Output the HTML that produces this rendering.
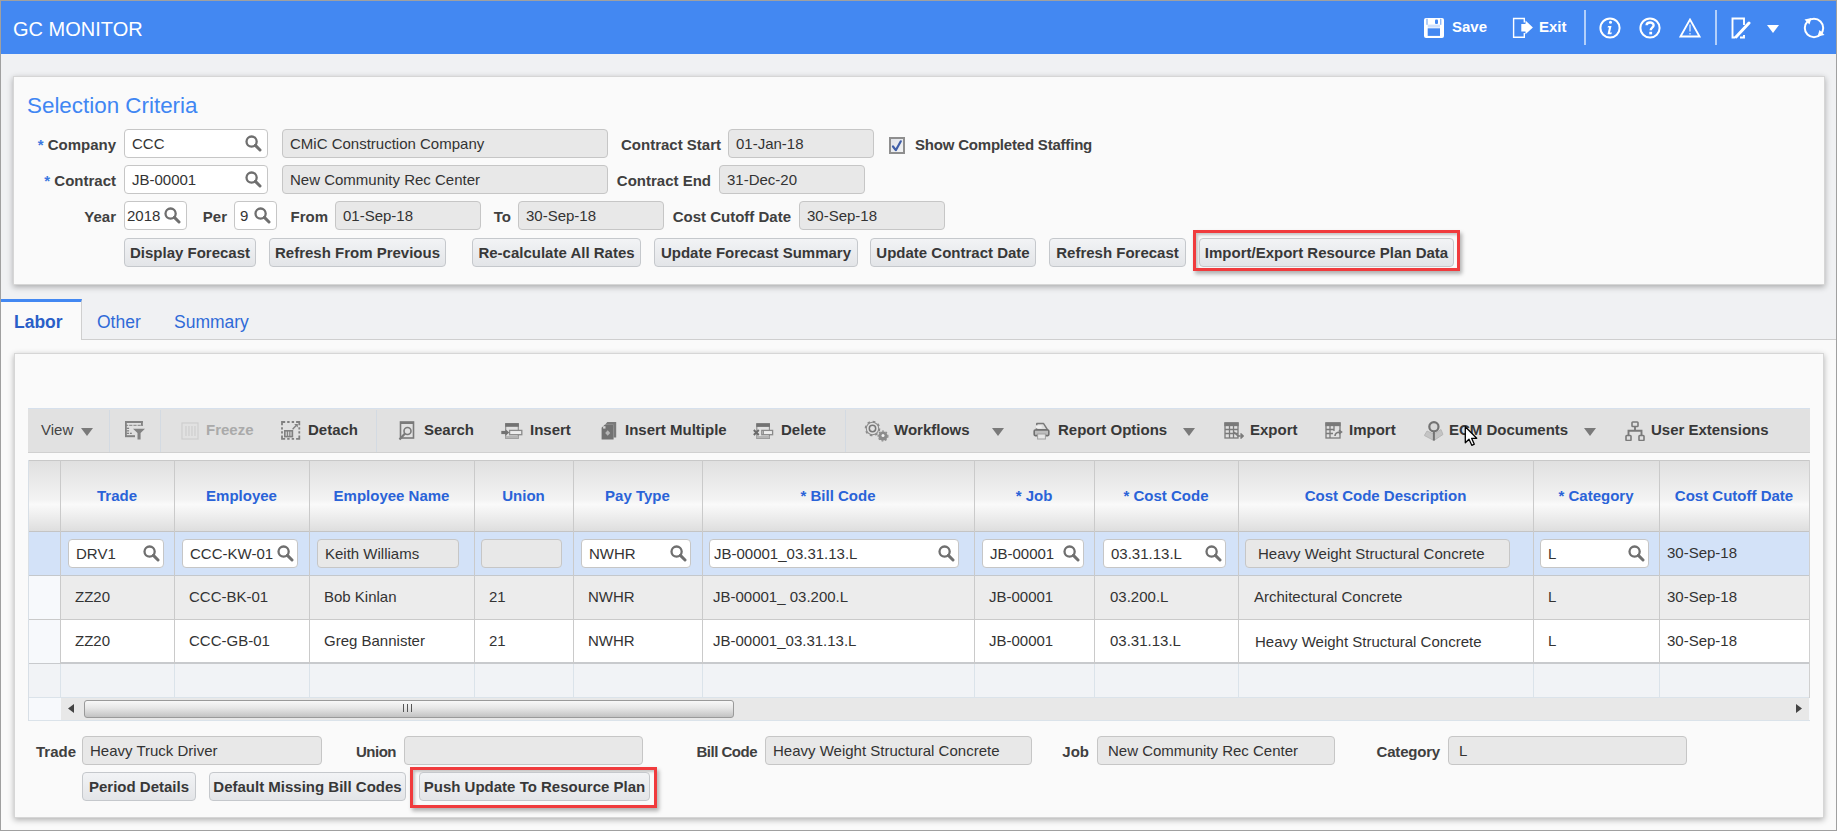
<!DOCTYPE html>
<html><head><meta charset="utf-8">
<style>
*{box-sizing:border-box}
html,body{margin:0;padding:0}
body{width:1837px;height:831px;position:relative;overflow:hidden;background:#f0f1f3;font-family:"Liberation Sans",sans-serif;color:#333;font-size:15px}
.a{position:absolute;white-space:nowrap}
#frame{position:absolute;left:0;top:0;width:1837px;height:831px;border:1px solid #a0a0a0;pointer-events:none;z-index:50}
#hdr{position:absolute;left:1px;top:1px;width:1835px;height:53px;background:#4388f2}
.ht{position:absolute;color:#fff;font-weight:bold;font-size:15px;line-height:20px;white-space:nowrap}
.panel{position:absolute;background:#fafafa;border:1px solid #d6d6d6;box-shadow:0 2px 6px rgba(0,0,0,.3)}
.lbl{position:absolute;white-space:nowrap;font-weight:bold;font-size:15px;line-height:29px;color:#404040;text-align:right;padding-top:1px}
.inp{position:absolute;height:29px;border:1px solid #c6c6c6;border-radius:4px;background:#fff;font-size:15px;line-height:27px;padding-left:7px;white-space:nowrap;color:#333;overflow:hidden}
.ro{background:#e8e8e8}
.btn{position:absolute;height:29px;border:1px solid #c5c8cc;border-radius:4px;background:linear-gradient(#f2f3f5,#e3e5e8);font-weight:bold;font-size:15px;line-height:27px;text-align:center;white-space:nowrap;color:#383838}
.red{position:absolute;border:3px solid #f03b3d;box-shadow:2px 3px 4px rgba(0,0,0,.3),inset 2px 2px 3px rgba(0,0,0,.22)}
.mag{position:absolute;width:17px;height:17px;right:5px;top:5px}
.tb{position:absolute;top:420px;font-weight:bold;font-size:15px;line-height:20px;white-space:nowrap;color:#383838}
.tsep{position:absolute;top:410px;width:1px;height:42px;background:#d3dae2}
.ico{position:absolute}
.vl{position:absolute;width:1px;background:#cacaca}
.hl{position:absolute;height:1px;background:#cacaca}
.th{position:absolute;top:486px;font-weight:bold;font-size:15px;line-height:20px;color:#2a63d8;text-align:center;white-space:nowrap}
.td{position:absolute;font-size:15px;line-height:20px;white-space:nowrap;color:#333}
.ti{position:absolute;top:539px;height:29px;border:1px solid #c6c6c6;border-radius:4px;background:#fff;font-size:15px;line-height:27px;padding-left:7px;white-space:nowrap;color:#333;overflow:hidden}
.ti.ro{background:#e8e8e8}
.ti .mag{right:3px}
</style></head><body>
<div id="frame"></div>
<div id="hdr"></div>
<div class="a" style="left:13px;top:17px;font-size:20px;line-height:24px;color:#fff">GC MONITOR</div>

<!-- header icons -->
<svg class="ico" style="left:1424px;top:17.5px" width="20" height="20" viewBox="0 0 20 20">
 <rect x="0" y="0" width="20" height="20" rx="2" fill="#fff"/>
 <rect x="3.7" y="10.3" width="12.3" height="7.6" fill="#4388f2"/>
 <rect x="11" y="1.5" width="3" height="4.5" rx="1" fill="#4388f2"/>
 <rect x="2.3" y="0.8" width="1.4" height="6" fill="#4388f2" opacity=".6"/>
 <rect x="16" y="0.8" width="1.4" height="6" fill="#4388f2" opacity=".6"/>
 <rect x="3.7" y="6.6" width="12.3" height="3" fill="#4388f2" opacity=".25"/>
</svg>
<div class="ht" style="left:1452px;top:17px">Save</div>
<svg class="ico" style="left:1511px;top:17px" width="23" height="22" viewBox="0 0 23 22" fill="none" stroke="#fff">
 <path d="M13.3 5.4 V1.5 H2.6 V20.2 H13.3 V15.9" stroke-width="1.4"/>
 <path d="M10.3 7.1 H14.5 V3.4 L21.9 10.5 L14.5 17.2 V14.5 H10.3 Z" fill="#fff" stroke="none"/>
</svg>
<div class="ht" style="left:1539px;top:17px">Exit</div>
<div class="a" style="left:1584px;top:10px;width:2px;height:35px;background:rgba(255,255,255,.6)"></div>
<svg class="ico" style="left:1599px;top:17px" width="22" height="22" viewBox="0 0 22 22">
 <circle cx="11" cy="11" r="9.6" fill="none" stroke="#fff" stroke-width="2"/>
 <circle cx="11.5" cy="5.3" r="1.5" fill="#fff"/>
 <path d="M9 9 H12.5 L11 15.5 H13 L12.3 17.3 H8.5 L10 10.6 H8.6 Z" fill="#fff"/>
</svg>
<svg class="ico" style="left:1639px;top:17px" width="22" height="22" viewBox="0 0 22 22">
 <circle cx="11" cy="11" r="9.6" fill="none" stroke="#fff" stroke-width="2"/>
 <path d="M7.6 8.3 C7.6 4.8 14.6 4.5 14.6 8.2 C14.6 10.6 11.7 10.6 11.7 13.2" fill="none" stroke="#fff" stroke-width="2.4"/>
 <rect x="10.3" y="14.8" width="2.8" height="2.6" fill="#fff"/>
</svg>
<svg class="ico" style="left:1679px;top:18px" width="22" height="20" viewBox="0 0 22 20">
 <path d="M11 1.5 L20.5 18.5 H1.5 Z" fill="none" stroke="#fff" stroke-width="1.8" stroke-linejoin="miter"/>
 <rect x="10.3" y="6.5" width="1.4" height="7" fill="#fff" opacity=".8"/>
 <rect x="10.3" y="15" width="1.4" height="1.5" fill="#fff" opacity=".8"/>
</svg>
<div class="a" style="left:1715px;top:10px;width:2px;height:35px;background:rgba(255,255,255,.6)"></div>
<svg class="ico" style="left:1731px;top:17px" width="21" height="22" viewBox="0 0 21 22" fill="none" stroke="#fff">
 <path d="M13 8 V1.5 H1.5 V20.5 H4 M9 20.5 H13 V18" stroke-width="1.9"/>
 <path d="M5 20 L18 6" stroke-width="3" stroke-linecap="round"/>
</svg>
<svg class="ico" style="left:1767px;top:25px" width="12" height="8" viewBox="0 0 12 8"><path d="M0 0 H12 L6 8 Z" fill="#fff"/></svg>
<svg class="ico" style="left:1803px;top:17px" width="23" height="22" viewBox="0 0 23 22">
 <circle cx="11" cy="11" r="9.2" fill="none" stroke="#fff" stroke-width="2"/>
 <path d="M1.5 2.5 L8.5 1 L6.5 7.5 Z" fill="#fff"/>
 <path d="M21.5 18 L14.5 19.5 L16.5 13 Z" fill="#fff"/>
</svg>

<!-- Selection criteria panel -->
<div class="panel" style="left:13px;top:76px;width:1812px;height:209px"></div>
<div class="a" style="left:27px;top:93px;font-size:22.4px;line-height:26px;color:#4086f3">Selection Criteria</div>

<div class="lbl" style="left:16px;top:129px;width:100px"><span style="color:#3a78e0">*</span> Company</div>
<div class="inp" style="left:124px;top:129px;width:144px">CCC<svg class="mag" viewBox="0 0 17 17"><circle cx="6.6" cy="6.6" r="5.1" fill="none" stroke="#6f6f6f" stroke-width="2.3"/><path d="M10.4 10.4 L15 15" stroke="#6f6f6f" stroke-width="3" stroke-linecap="round"/></svg></div>
<div class="inp ro" style="left:282px;top:129px;width:326px">CMiC Construction Company</div>
<div class="lbl" style="left:600px;top:129px;width:121px">Contract Start</div>
<div class="inp ro" style="left:728px;top:129px;width:146px">01-Jan-18</div>
<svg class="ico" style="left:889px;top:137px" width="16" height="17" viewBox="0 0 16 17">
 <defs><linearGradient id="cbg" x1="0" y1="0" x2="1" y2="1"><stop offset="0" stop-color="#dfe2e8"/><stop offset="1" stop-color="#f4f4f4"/></linearGradient></defs>
 <rect x="1" y="1" width="14" height="15" fill="url(#cbg)" stroke="#8e8e8e" stroke-width="2"/>
 <path d="M4 9.5 L6.8 13.2 L11.8 4.3" fill="none" stroke="#3f5ea8" stroke-width="2.2" stroke-linecap="round" stroke-linejoin="round"/>
</svg>
<div class="lbl" style="left:915px;top:129px;text-align:left;letter-spacing:-.2px">Show Completed Staffing</div>

<div class="lbl" style="left:16px;top:165px;width:100px"><span style="color:#3a78e0">*</span> Contract</div>
<div class="inp" style="left:124px;top:165px;width:144px">JB-00001<svg class="mag" viewBox="0 0 17 17"><circle cx="6.6" cy="6.6" r="5.1" fill="none" stroke="#6f6f6f" stroke-width="2.3"/><path d="M10.4 10.4 L15 15" stroke="#6f6f6f" stroke-width="3" stroke-linecap="round"/></svg></div>
<div class="inp ro" style="left:282px;top:165px;width:326px">New Community Rec Center</div>
<div class="lbl" style="left:600px;top:165px;width:111px">Contract End</div>
<div class="inp ro" style="left:719px;top:165px;width:146px">31-Dec-20</div>

<div class="lbl" style="left:16px;top:201px;width:100px">Year</div>
<div class="inp" style="left:124px;top:201px;width:63px;padding-left:2px">2018<svg class="mag" viewBox="0 0 17 17"><circle cx="6.6" cy="6.6" r="5.1" fill="none" stroke="#6f6f6f" stroke-width="2.3"/><path d="M10.4 10.4 L15 15" stroke="#6f6f6f" stroke-width="3" stroke-linecap="round"/></svg></div>
<div class="lbl" style="left:190px;top:201px;width:37px">Per</div>
<div class="inp" style="left:234px;top:201px;width:43px;padding-left:5px">9<svg class="mag" viewBox="0 0 17 17"><circle cx="6.6" cy="6.6" r="5.1" fill="none" stroke="#6f6f6f" stroke-width="2.3"/><path d="M10.4 10.4 L15 15" stroke="#6f6f6f" stroke-width="3" stroke-linecap="round"/></svg></div>
<div class="lbl" style="left:250px;top:201px;width:78px">From</div>
<div class="inp ro" style="left:335px;top:201px;width:146px">01-Sep-18</div>
<div class="lbl" style="left:450px;top:201px;width:61px">To</div>
<div class="inp ro" style="left:518px;top:201px;width:146px">30-Sep-18</div>
<div class="lbl" style="left:640px;top:201px;width:151px">Cost Cutoff Date</div>
<div class="inp ro" style="left:799px;top:201px;width:146px">30-Sep-18</div>

<div class="btn" style="left:124px;top:238px;width:132px">Display Forecast</div>
<div class="btn" style="left:269px;top:238px;width:177px">Refresh From Previous</div>
<div class="btn" style="left:472px;top:238px;width:169px">Re-calculate All Rates</div>
<div class="btn" style="left:654px;top:238px;width:204px">Update Forecast Summary</div>
<div class="btn" style="left:870px;top:238px;width:166px">Update Contract Date</div>
<div class="btn" style="left:1049px;top:238px;width:137px">Refresh Forecast</div>
<div class="red" style="left:1193px;top:230px;width:267px;height:41px"></div>
<div class="btn" style="left:1199px;top:238px;width:255px">Import/Export Resource Plan Data</div>

<!-- tabs -->
<div class="a" style="left:1px;top:339px;width:1835px;height:491px;background:#fafafa;border-top:1px solid #cfcfcf"></div>
<div class="a" style="left:1px;top:299px;width:81px;height:41px;background:#fafafa;border-top:3px solid #4388f2;border-right:1px solid #cfcfcf"></div>
<div class="a" style="left:14px;top:311px;font-size:17.5px;line-height:22px;font-weight:bold;color:#2a5fc8">Labor</div>
<div class="a" style="left:97px;top:311px;font-size:17.5px;line-height:22px;color:#2f6ad8">Other</div>
<div class="a" style="left:174px;top:311px;font-size:17.5px;line-height:22px;color:#2f6ad8">Summary</div>

<!-- panel 2 -->
<div class="panel" style="left:14px;top:353px;width:1810px;height:465px"></div>

<!-- toolbar -->
<div class="a" style="left:28px;top:408px;width:1782px;height:45px;background:#e1e1e1;border-top:1px solid #d6e0ec;border-bottom:1px solid #d0d0d0"></div>
<div class="a" style="left:41px;top:420px;font-size:15px;line-height:20px;color:#444">View</div>
<svg class="ico" style="left:81px;top:428px" width="12" height="8" viewBox="0 0 12 8"><path d="M0 0 H12 L6 8 Z" fill="#7a7a7a"/></svg>
<div class="tsep" style="left:109px"></div>
<svg class="ico" style="left:124px;top:420px" width="22" height="21" viewBox="0 0 22 21" fill="#838383">
 <rect x="1" y="1" width="17.8" height="2"/><rect x="1" y="1" width="1.8" height="16"/><rect x="1" y="15.2" width="10" height="2"/>
 <rect x="17" y="1" width="1.8" height="4.8"/>
 <path d="M1 5.3 H18.8" stroke="#838383" stroke-width="1" stroke-dasharray="3.2 1"/>
 <rect x="2.5" y="7.7" width="2.6" height="1.3"/><rect x="2.5" y="10.2" width="2.6" height="1.3"/><rect x="2.5" y="12.7" width="2.6" height="1.3"/><rect x="6" y="12.7" width="1.8" height="1.3"/>
 <path d="M9 8.7 H21 L16.6 13 V19.6 H13.5 V13 Z"/>
</svg>
<div class="tsep" style="left:160px"></div>
<svg class="ico" style="left:181px;top:422px" width="18" height="18" viewBox="0 0 18 18" fill="none" stroke="#cfcfcf" stroke-width="1.3">
 <rect x="1" y="1" width="16" height="16"/><path d="M5 4 V14 M8 4 V14 M11 4 V14 M14 4 V14"/>
</svg>
<div class="tb" style="left:206px;color:#aaa">Freeze</div>
<svg class="ico" style="left:280px;top:420px" width="22" height="21" viewBox="0 0 22 21" fill="none" stroke="#808080" stroke-width="1.8">
 <path d="M2 5.2 V2 H5.2 M16.1 2 H19.3 V5.2 M19.3 15.6 V18.8 H16.1 M5.2 18.8 H2 V15.6"/>
 <path d="M7.2 2 H9.6 M11.7 2 H14.1 M7.2 18.8 H9.6 M11.7 18.8 H14.1 M2 7.2 V9.6 M2 11.2 V13.6 M19.3 7.2 V9.6 M19.3 11.2 V13.6"/>
 <rect x="4.8" y="10.8" width="7.6" height="5.8" fill="#d2d2d2" stroke-width="1.6"/>
 <path d="M7.4 11 V16.4 M9.8 11 V16.4" stroke-width="1.1"/>
 <path d="M12.6 9.2 L16.2 5.6" stroke-width="1.4"/>
 <path d="M14.2 4 H17.8 V7.6 Z" fill="#808080" stroke="none"/>
</svg>
<div class="tb" style="left:308px">Detach</div>
<div class="tsep" style="left:376px"></div>
<svg class="ico" style="left:398px;top:421px" width="17" height="20" viewBox="0 0 17 20" fill="none" stroke="#7a7a7a">
 <rect x="2.5" y="1" width="13" height="16" stroke-width="1.6"/><rect x="3" y="1" width="12" height="2" fill="#7a7a7a" stroke="none"/>
 <circle cx="9.5" cy="10" r="3.5" stroke-width="1.6"/><path d="M7 12.5 L1.5 18.5" stroke-width="2.2"/>
</svg>
<div class="tb" style="left:424px">Search</div>
<svg class="ico" style="left:501px;top:422px" width="22" height="18" viewBox="0 0 22 18">
 <rect x="4.7" y="1.7" width="12.6" height="14.6" fill="none" stroke="#8a8a8a" stroke-width="1.1"/>
 <rect x="4.2" y="1.2" width="13.6" height="3.6" fill="#727272"/>
 <rect x="4.7" y="13.9" width="12.6" height="2.4" fill="#b5b5b5"/>
 <rect x="8.6" y="8.4" width="12.2" height="4.3" fill="#ececec" stroke="#8a8a8a" stroke-width="1.3"/>
 <rect x="0.3" y="8.9" width="5" height="3.2" fill="#727272"/>
 <path d="M4.5 7.2 L8.3 10.5 L4.5 13.8 Z" fill="#727272"/>
</svg>
<div class="tb" style="left:530px">Insert</div>
<svg class="ico" style="left:600px;top:421px" width="18" height="20" viewBox="0 0 18 20">
 <path d="M7.3 1 H16.2 V16.6 H13.6 V3.8 H5 Z" fill="#7a7a7a"/>
 <path d="M4.6 3.8 H13.6 V18.6 H1.6 V6.8 Z" fill="#727272"/>
 <rect x="3.1" y="5.2" width="2.4" height="2.4" fill="#e6e6e6" opacity=".85"/>
 <path d="M7.7 9.3 L10.2 12 L7.7 14.8 L5.2 12 Z" fill="#b5b5b5"/>
</svg>
<div class="tb" style="left:625px">Insert Multiple</div>
<svg class="ico" style="left:752px;top:422px" width="22" height="18" viewBox="0 0 22 18">
 <rect x="4.8" y="1.8" width="12.6" height="14.6" fill="none" stroke="#8a8a8a" stroke-width="1.1"/>
 <rect x="4.3" y="1.3" width="13.6" height="3.6" fill="#727272"/>
 <rect x="4.8" y="14" width="12.6" height="2.4" fill="#b5b5b5"/>
 <rect x="9.8" y="8.4" width="10.8" height="4.3" fill="#ececec" stroke="#8a8a8a" stroke-width="1.3"/>
 <path d="M11.3 8.4 V12.7" stroke="#8a8a8a" stroke-width="1.2"/>
 <path d="M1.8 8 L6.8 13 M6.8 8 L1.8 13" stroke="#6a6a6a" stroke-width="1.9"/>
</svg>
<div class="tb" style="left:781px">Delete</div>
<div class="tsep" style="left:845px"></div>
<svg class="ico" style="left:864px;top:420px" width="25" height="22" viewBox="0 0 25 22" fill="none">
 <circle cx="8.5" cy="8.5" r="6.2" stroke="#8a8a8a" stroke-width="1.1"/>
 <circle cx="8.5" cy="8.5" r="7" stroke="#8a8a8a" stroke-width="1.6" stroke-dasharray="2.6 2.9"/>
 <circle cx="8.5" cy="8.5" r="3.2" stroke="#777" stroke-width="1.5"/>
 <circle cx="19" cy="16" r="4.6" fill="#8c8c8c"/>
 <circle cx="19" cy="16" r="4.9" stroke="#8c8c8c" stroke-width="1.2" stroke-dasharray="1.8 1.8"/>
 <circle cx="19" cy="15.6" r="1.5" fill="#f2f2f2"/>
</svg>
<div class="tb" style="left:894px">Workflows</div>
<svg class="ico" style="left:992px;top:428px" width="12" height="8" viewBox="0 0 12 8"><path d="M0 0 H12 L6 8 Z" fill="#7a7a7a"/></svg>
<svg class="ico" style="left:1032px;top:421px" width="19" height="19" viewBox="0 0 19 19">
 <path d="M4.4 8.8 L4.8 2.6 H11.6 L15.6 8.8 Z" fill="#dedede" stroke="#7a7a7a" stroke-width="1.5" stroke-linejoin="round"/>
 <rect x="3.6" y="4.3" width="6" height="3" fill="#f0f0f0"/>
 <rect x="2.2" y="9" width="14.6" height="5.6" rx="1" fill="#bdbdbd" stroke="#707070" stroke-width="1.6"/>
 <rect x="5.6" y="13" width="7.8" height="5" fill="#e6e6e6" stroke="#a0a0a0" stroke-width="1"/>
</svg>
<div class="tb" style="left:1058px">Report Options</div>
<svg class="ico" style="left:1183px;top:428px" width="12" height="8" viewBox="0 0 12 8"><path d="M0 0 H12 L6 8 Z" fill="#7a7a7a"/></svg>
<svg class="ico" style="left:1224px;top:422px" width="20" height="18" viewBox="0 0 20 18" fill="none" stroke="#7a7a7a" stroke-width="1.3">
 <rect x="1" y="1" width="13" height="15"/><rect x="1" y="1" width="13" height="2.5" fill="#7a7a7a"/>
 <path d="M1 7.5 H14 M1 11.5 H14 M5.5 3 V16 M9.5 3 V16"/><path d="M10 10 L14 14 H19 M16.5 11.5 L19 14 L16.5 16.5" stroke-width="1.6"/>
</svg>
<div class="tb" style="left:1250px">Export</div>
<svg class="ico" style="left:1325px;top:422px" width="18" height="18" viewBox="0 0 18 18" fill="none" stroke="#7a7a7a" stroke-width="1.3">
 <rect x="1" y="1" width="14" height="15"/><rect x="1" y="1" width="14" height="2.5" fill="#7a7a7a"/>
 <path d="M1 7.5 H9 M1 11.5 H8 M5 3 V16 M9 3 V9"/><path d="M10 14 C10 10.5 12.5 10 16 10 M14 8 L16.5 10 L14 12" stroke-width="1.6"/>
</svg>
<div class="tb" style="left:1349px">Import</div>
<svg class="ico" style="left:1424px;top:420px" width="20" height="22" viewBox="0 0 20 22">
 <path d="M0.3 15.5 L3 11 L9.9 14 L17 9.5 L19 14.5 L9.9 20.5 Z" fill="#c4c4c4" stroke="#b0b0b0" stroke-width=".8"/>
 <circle cx="9.9" cy="6.8" r="4.6" fill="#d8d8d8" stroke="#737373" stroke-width="2.2"/>
 <path d="M9.9 11.5 V20.5" stroke="#737373" stroke-width="2"/>
</svg>
<div class="tb" style="left:1449px">ECM Documents</div>
<svg class="ico" style="left:1584px;top:428px" width="12" height="8" viewBox="0 0 12 8"><path d="M0 0 H12 L6 8 Z" fill="#7a7a7a"/></svg>
<svg class="ico" style="left:1625px;top:421px" width="20" height="20" viewBox="0 0 20 20" fill="none" stroke="#7a7a7a" stroke-width="1.6">
 <rect x="7" y="1" width="6" height="4.5" rx=".8"/><path d="M10 5.5 V9.8 M3.5 14 V9.8 H16.5 V14" stroke-width="1.9"/>
 <rect x="1" y="14.5" width="5" height="5" rx=".8"/><rect x="14" y="14.5" width="5" height="5" rx=".8"/>
</svg>
<div class="tb" style="left:1651px">User Extensions</div>
<!-- cursor -->
<svg class="ico" style="left:1464px;top:426px;z-index:10" width="14" height="20" viewBox="0 0 14 20">
 <path d="M1.3 0.8 V16.8 L5 13.2 L7.8 19.3 L10.3 18.2 L7.6 12.3 L12.7 12.3 Z" fill="#fff" stroke="#000" stroke-width="1.3" stroke-linejoin="round"/>
</svg>

<!-- table -->
<div class="a" style="left:28px;top:460px;width:1782px;height:72px;background:linear-gradient(#e0e0e0 0%,#f3f3f3 55%,#fafafa 62%,#dedede 100%);border-top:1px solid #c8c8c8;border-bottom:1px solid #c4c4c4"></div>
<div class="a" style="left:28px;top:532px;width:1782px;height:44px;background:#d3e2f8;border-bottom:1px solid #c4c8cc"></div>
<div class="a" style="left:28px;top:576px;width:1782px;height:44px;background:#ececec;border-bottom:1px solid #cacaca"></div>
<div class="a" style="left:28px;top:576px;width:33px;height:43px;background:#f7f9fc"></div>
<div class="a" style="left:28px;top:620px;width:1782px;height:44px;background:#fff;border-bottom:2px solid #c8cacd"></div>
<div class="a" style="left:28px;top:620px;width:33px;height:43px;background:#f7f9fc"></div>
<div class="a" style="left:28px;top:664px;width:1782px;height:34px;background:#f1f3f6;border-bottom:1px solid #dbe3ea"></div>
<div class="a" style="left:28px;top:698px;width:1782px;height:23px;background:#f7f9fc;border-bottom:1px solid #dbe3ea"></div>
<div class="a" style="left:61px;top:698px;width:1748px;height:22px;background:#e8e8e8"></div>
<svg class="ico" style="left:68px;top:704px" width="7" height="9" viewBox="0 0 7 9"><path d="M6 0 V9 L0 4.5 Z" fill="#444"/></svg>
<svg class="ico" style="left:1795px;top:704px" width="7" height="9" viewBox="0 0 7 9"><path d="M1 0 V9 L7 4.5 Z" fill="#444"/></svg>
<div class="a" style="left:84px;top:700px;width:650px;height:18px;border:1px solid #9a9a9a;border-radius:3px;background:linear-gradient(#f8f8f8,#e6e6e6 45%,#c2c2c2)"></div>
<div class="a" style="left:403px;top:704px;width:9px;height:8px;border-left:1px solid #555;border-right:1px solid #555"></div><div class="a" style="left:407px;top:704px;width:1px;height:8px;background:#555"></div>
<div class="vl" style="left:28px;top:460px;height:261px;background:#d8dfe6"></div>
<div class="vl" style="left:1809px;top:460px;height:238px;background:#d0d0d0"></div>
<div class="vl" style="left:60px;top:460px;height:204px"></div>
<div class="vl" style="left:60px;top:664px;height:34px;background:#dbe3ea"></div>
<div class="vl" style="left:174px;top:460px;height:204px"></div>
<div class="vl" style="left:174px;top:664px;height:34px;background:#dbe3ea"></div>
<div class="vl" style="left:309px;top:460px;height:204px"></div>
<div class="vl" style="left:309px;top:664px;height:34px;background:#dbe3ea"></div>
<div class="vl" style="left:474px;top:460px;height:204px"></div>
<div class="vl" style="left:474px;top:664px;height:34px;background:#dbe3ea"></div>
<div class="vl" style="left:573px;top:460px;height:204px"></div>
<div class="vl" style="left:573px;top:664px;height:34px;background:#dbe3ea"></div>
<div class="vl" style="left:702px;top:460px;height:204px"></div>
<div class="vl" style="left:702px;top:664px;height:34px;background:#dbe3ea"></div>
<div class="vl" style="left:974px;top:460px;height:204px"></div>
<div class="vl" style="left:974px;top:664px;height:34px;background:#dbe3ea"></div>
<div class="vl" style="left:1094px;top:460px;height:204px"></div>
<div class="vl" style="left:1094px;top:664px;height:34px;background:#dbe3ea"></div>
<div class="vl" style="left:1238px;top:460px;height:204px"></div>
<div class="vl" style="left:1238px;top:664px;height:34px;background:#dbe3ea"></div>
<div class="vl" style="left:1533px;top:460px;height:204px"></div>
<div class="vl" style="left:1533px;top:664px;height:34px;background:#dbe3ea"></div>
<div class="vl" style="left:1659px;top:460px;height:204px"></div>
<div class="vl" style="left:1659px;top:664px;height:34px;background:#dbe3ea"></div>
<div class="th" style="left:60px;width:114px">Trade</div>
<div class="th" style="left:174px;width:135px">Employee</div>
<div class="th" style="left:309px;width:165px">Employee Name</div>
<div class="th" style="left:474px;width:99px">Union</div>
<div class="th" style="left:573px;width:129px">Pay Type</div>
<div class="th" style="left:702px;width:272px">* Bill Code</div>
<div class="th" style="left:974px;width:120px">* Job</div>
<div class="th" style="left:1094px;width:144px">* Cost Code</div>
<div class="th" style="left:1238px;width:295px">Cost Code Description</div>
<div class="th" style="left:1533px;width:126px">* Category</div>
<div class="th" style="left:1659px;width:150px">Cost Cutoff Date</div>
<div class="ti" style="left:68px;width:96px">DRV1<svg class="mag" viewBox="0 0 17 17"><circle cx="6.6" cy="6.6" r="5.1" fill="none" stroke="#6f6f6f" stroke-width="2.3"/><path d="M10.4 10.4 L15 15" stroke="#6f6f6f" stroke-width="3" stroke-linecap="round"/></svg></div>
<div class="ti" style="left:182px;width:116px">CCC-KW-01<svg class="mag" viewBox="0 0 17 17"><circle cx="6.6" cy="6.6" r="5.1" fill="none" stroke="#6f6f6f" stroke-width="2.3"/><path d="M10.4 10.4 L15 15" stroke="#6f6f6f" stroke-width="3" stroke-linecap="round"/></svg></div>
<div class="ti ro" style="left:317px;width:142px">Keith Williams</div>
<div class="ti ro" style="left:481px;width:81px"></div>
<div class="ti" style="left:581px;width:110px">NWHR<svg class="mag" viewBox="0 0 17 17"><circle cx="6.6" cy="6.6" r="5.1" fill="none" stroke="#6f6f6f" stroke-width="2.3"/><path d="M10.4 10.4 L15 15" stroke="#6f6f6f" stroke-width="3" stroke-linecap="round"/></svg></div>
<div class="ti" style="left:709px;width:250px;padding-left:4px">JB-00001_03.31.13.L<svg class="mag" viewBox="0 0 17 17"><circle cx="6.6" cy="6.6" r="5.1" fill="none" stroke="#6f6f6f" stroke-width="2.3"/><path d="M10.4 10.4 L15 15" stroke="#6f6f6f" stroke-width="3" stroke-linecap="round"/></svg></div>
<div class="ti" style="left:982px;width:102px">JB-00001<svg class="mag" viewBox="0 0 17 17"><circle cx="6.6" cy="6.6" r="5.1" fill="none" stroke="#6f6f6f" stroke-width="2.3"/><path d="M10.4 10.4 L15 15" stroke="#6f6f6f" stroke-width="3" stroke-linecap="round"/></svg></div>
<div class="ti" style="left:1103px;width:123px">03.31.13.L<svg class="mag" viewBox="0 0 17 17"><circle cx="6.6" cy="6.6" r="5.1" fill="none" stroke="#6f6f6f" stroke-width="2.3"/><path d="M10.4 10.4 L15 15" stroke="#6f6f6f" stroke-width="3" stroke-linecap="round"/></svg></div>
<div class="ti ro" style="left:1245px;width:265px;padding-left:12px">Heavy Weight Structural Concrete</div>
<div class="ti" style="left:1540px;width:109px">L<svg class="mag" viewBox="0 0 17 17"><circle cx="6.6" cy="6.6" r="5.1" fill="none" stroke="#6f6f6f" stroke-width="2.3"/><path d="M10.4 10.4 L15 15" stroke="#6f6f6f" stroke-width="3" stroke-linecap="round"/></svg></div>
<div class="td" style="left:1667px;top:543px">30-Sep-18</div>
<div class="td" style="left:75px;top:587px">ZZ20</div>
<div class="td" style="left:189px;top:587px">CCC-BK-01</div>
<div class="td" style="left:324px;top:587px">Bob Kinlan</div>
<div class="td" style="left:489px;top:587px">21</div>
<div class="td" style="left:588px;top:587px">NWHR</div>
<div class="td" style="left:713px;top:587px">JB-00001_ 03.200.L</div>
<div class="td" style="left:989px;top:587px">JB-00001</div>
<div class="td" style="left:1110px;top:587px">03.200.L</div>
<div class="td" style="left:1254px;top:587px">Architectural Concrete</div>
<div class="td" style="left:1548px;top:587px">L</div>
<div class="td" style="left:1667px;top:587px">30-Sep-18</div>
<div class="td" style="left:75px;top:631px">ZZ20</div>
<div class="td" style="left:189px;top:631px">CCC-GB-01</div>
<div class="td" style="left:324px;top:631px">Greg Bannister</div>
<div class="td" style="left:489px;top:631px">21</div>
<div class="td" style="left:588px;top:631px">NWHR</div>
<div class="td" style="left:713px;top:631px">JB-00001_03.31.13.L</div>
<div class="td" style="left:989px;top:631px">JB-00001</div>
<div class="td" style="left:1110px;top:631px">03.31.13.L</div>
<div class="td" style="left:1255px;top:632px">Heavy Weight Structural Concrete</div>
<div class="td" style="left:1548px;top:631px">L</div>
<div class="td" style="left:1667px;top:631px">30-Sep-18</div>
<!-- bottom form -->
<div class="lbl" style="left:0px;top:736px;width:76px">Trade</div>
<div class="inp ro" style="left:82px;top:736px;width:240px">Heavy Truck Driver</div>
<div class="lbl" style="left:300px;top:736px;width:96px;letter-spacing:-.5px">Union</div>
<div class="inp ro" style="left:404px;top:736px;width:239px"></div>
<div class="lbl" style="left:650px;top:736px;width:107px;letter-spacing:-.5px">Bill Code</div>
<div class="inp ro" style="left:765px;top:736px;width:267px">Heavy Weight Structural Concrete</div>
<div class="lbl" style="left:1040px;top:736px;width:49px">Job</div>
<div class="inp ro" style="left:1097px;top:736px;width:238px;padding-left:10px">New Community Rec Center</div>
<div class="lbl" style="left:1340px;top:736px;width:100px;letter-spacing:-.2px">Category</div>
<div class="inp ro" style="left:1448px;top:736px;width:239px;padding-left:10px">L</div>
<div class="btn" style="left:82px;top:772px;width:114px">Period Details</div>
<div class="btn" style="left:209px;top:772px;width:197px">Default Missing Bill Codes</div>
<div class="red" style="left:410px;top:767px;width:247px;height:41px"></div>
<div class="btn" style="left:419px;top:772px;width:231px">Push Update To Resource Plan</div>

</body></html>
